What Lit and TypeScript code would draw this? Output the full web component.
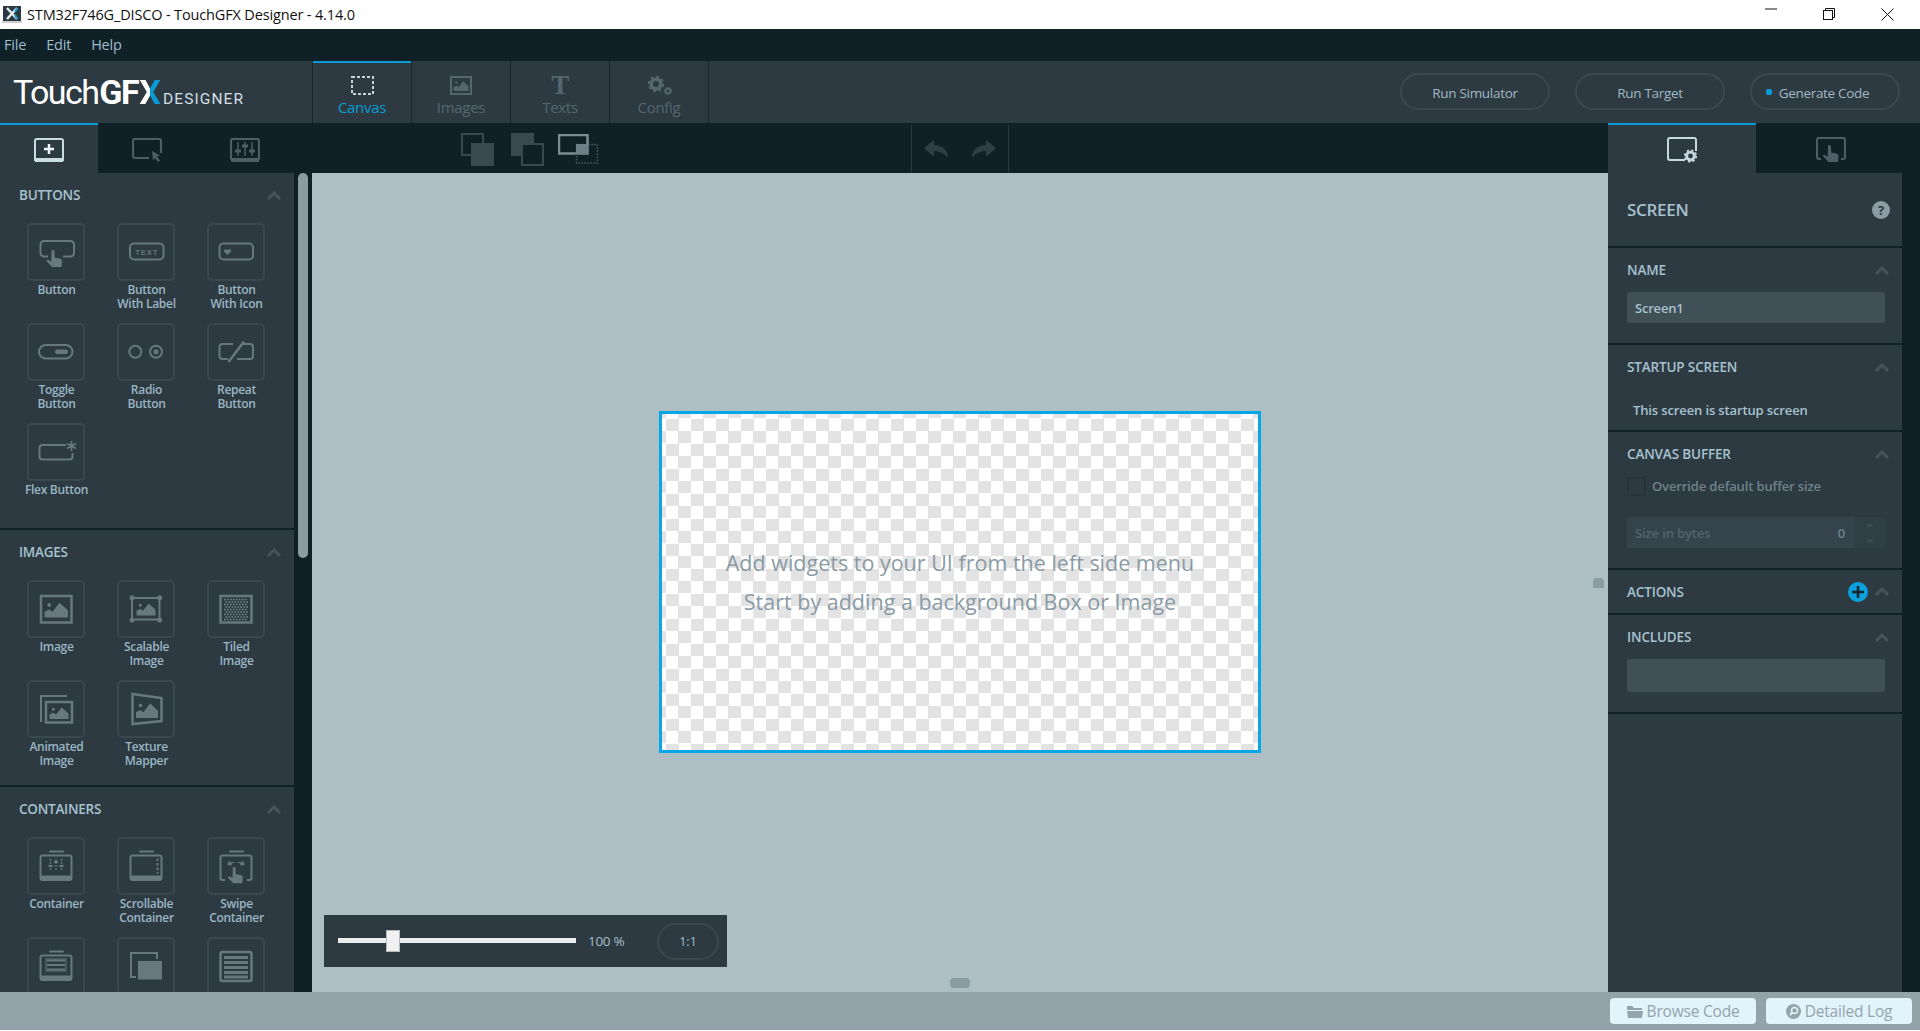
import { LitElement, html, css, svg } from "lit";
import { customElement } from "lit/decorators.js";

const IC = "#67787f";

const gear = (cx: number, cy: number, r: number, c: string) => svg`
  <circle cx=${cx} cy=${cy} r=${r * 0.6} fill="none" stroke=${c} stroke-width=${r * 0.45}/>
  <circle cx=${cx} cy=${cy} r=${r * 0.88} fill="none" stroke=${c} stroke-width=${r * 0.28}
    stroke-dasharray=${(2 * Math.PI * r * 0.88) / 16}/>`;

const picture = (x: number, y: number, w: number, h: number, c: string) => svg`
  <circle cx=${x + w * 0.2} cy=${y + h * 0.3} r=${Math.max(1.2, w * 0.08)} fill=${c}/>
  <path fill=${c} d="M${x} ${y + h}V${y + h * 0.68}l${w * 0.2} ${-h * 0.12} ${w * 0.14} ${h * 0.12} ${w * 0.3} ${-h * 0.5} ${w * 0.36} ${h * 0.42}V${y + h}z"/>`;

const hand = (dx: number, dy: number, c: string, s = 1) => svg`
  <path transform="translate(${dx} ${dy}) scale(${s})" fill=${c}
    d="M5 0.5c1-.9 2.6-.5 3 .8l.2 6.2 5 1c1.6.3 2.4 1.400 2.300 3l-.500 5.500H5.500L.3 11.500c-.8-1 .4-2.300 1.600-1.600l2.800 1.800z"/>`;

const body = (c: string) => svg`
  <path d="M23 14.500h13" stroke=${c} stroke-width="2" fill="none" stroke-linecap="round"/>
  <path d="M15.500 18.500h27a2 2 0 0 1 2 2V41a2 2 0 0 1-2 2h-27a2 2 0 0 1-2-2V20.500a2 2 0 0 1 2-2z" stroke=${c} stroke-width="2" fill="none"/>
  <rect x="13" y="38.500" width="32" height="4.500" rx="1" fill=${c}/>`;

const sliders = (x0: number, y0: number, c: string, w = 1.2) => svg`
  <path stroke=${c} stroke-width=${w} fill="none" stroke-dasharray="2 1" d="M${x0} ${y0}v12M${x0 + 5.500} ${y0}v12M${x0 + 11} ${y0}v12"/>
  <path stroke=${c} stroke-width="2.200" d="M${x0 - 2} ${y0 + 7}h4M${x0 + 3.500} ${y0 + 3}h4M${x0 + 9} ${y0 + 7}h4"/>`;

const ICONS: Record<string, unknown> = {
  button: svg`
    <path d="M21 33.500h-4a3.500 3.500 0 0 1-3.500-3.500v-8.500a3.500 3.500 0 0 1 3.500-3.500h26.500a3.500 3.500 0 0 1 3.500 3.500V30a3.500 3.500 0 0 1-3.500 3.500H36" fill="none" stroke=${IC} stroke-width="2"/>
    ${hand(19.5, 27, IC)}`,
  label: svg`
    <rect x="13" y="20.500" width="33.500" height="16" rx="4" fill="none" stroke=${IC} stroke-width="2"/>
    <text x="29.800" y="31.500" text-anchor="middle" font-family="Liberation Sans" font-weight="700" font-size="7.500" letter-spacing="1" fill=${IC}>TEXT</text>`,
  icon: svg`
    <rect x="12.500" y="20.500" width="33.500" height="16" rx="4" fill="none" stroke=${IC} stroke-width="2"/>
    <path d="M20.500 32l-3.500-3.500c-1.300-1.800 1.800-3.300 3.500-1.500 1.700-1.800 4.800-.3 3.500 1.500z" fill=${IC}/>`,
  toggle: svg`
    <rect x="12" y="22" width="33.500" height="13.500" rx="6.700" fill="none" stroke=${IC} stroke-width="2"/>
    <rect x="28" y="26.500" width="13" height="4.500" rx="2.200" fill=${IC}/>`,
  radio: svg`
    <circle cx="18.300" cy="28.700" r="6" fill="none" stroke=${IC} stroke-width="2"/>
    <circle cx="39" cy="28.700" r="6" fill="none" stroke=${IC} stroke-width="2"/>
    <circle cx="39" cy="28.700" r="2.500" fill=${IC}/>`,
  repeat: svg`
    <path d="M26 21H15.500a3 3 0 0 0-3 3v9a3 3 0 0 0 3 3H21M36 21h7a3 3 0 0 1 3 3v9a3 3 0 0 1-3 3H30" fill="none" stroke=${IC} stroke-width="2"/>
    <path d="M37 18.500L21.500 39" stroke=${IC} stroke-width="2.500"/>`,
  flex: svg`
    <path d="M39 22H15.500a3 3 0 0 0-3 3v8.500a3 3 0 0 0 3 3h27a3 3 0 0 0 3-3V30" fill="none" stroke=${IC} stroke-width="2"/>
    <path d="M44.500 18v10M40 20.500l9 5M49 20.500l-9 5" stroke=${IC} stroke-width="1.800"/>`,
  image: svg`
    <rect x="14" y="16" width="30.500" height="26.500" fill="none" stroke=${IC} stroke-width="2.500"/>
    ${picture(17.5, 19.5, 23.5, 18, IC)}`,
  scalable: svg`
    <path d="M16 18h25M16 39.500h25M15 20v18M42.500 20v18" stroke=${IC} stroke-width="2" fill="none"/>
    <circle cx="15" cy="17.700" r="2.500" fill=${IC}/><circle cx="42.700" cy="17.700" r="2.500" fill=${IC}/>
    <circle cx="15" cy="40" r="2.500" fill=${IC}/><circle cx="42.700" cy="40" r="2.500" fill=${IC}/>
    ${picture(19.5, 21, 19, 14.5, IC)}`,
  tiled: svg`
    <rect x="13.500" y="16" width="31" height="26.500" fill="none" stroke=${IC} stroke-width="2.500"/>
    ${[0, 1, 2, 3, 4, 5, 6, 7, 8].map(
      (i) => svg`<path d="M17 ${19.5 + i * 2.5}h24" stroke="#7d8d94" stroke-width="1.500" stroke-dasharray="1.500 1.500" stroke-dashoffset=${i % 2 ? 1.5 : 0}/>`
    )}`,
  animated: svg`
    <path d="M40 16H14v26" fill="none" stroke=${IC} stroke-width="2"/>
    <rect x="19" y="22" width="26" height="20.500" fill="none" stroke=${IC} stroke-width="2.500"/>
    ${picture(22.5, 25, 19, 14, IC)}`,
  texture: svg`
    <path d="M15.500 14l29 4v23l-29 3z" fill="none" stroke=${IC} stroke-width="2.500"/>
    ${picture(19, 20, 22, 18, IC)}`,
  container: svg`${body(IC)}${sliders(23.5, 22, IC)}`,
  scrollable: svg`${body(IC)}<path d="M40.500 21.500v15" stroke=${IC} stroke-width="2" stroke-dasharray="2.500 2"/>`,
  swipe: svg`
    <path d="M23 14.500h13" stroke=${IC} stroke-width="2" fill="none" stroke-linecap="round"/>
    <path d="M18 43h-2.500a2 2 0 0 1-2-2V20.500a2 2 0 0 1 2-2h27a2 2 0 0 1 2 2V41a2 2 0 0 1-2 2H40" stroke=${IC} stroke-width="2" fill="none"/>
    <path d="M20 28l2.500-4.500 1 2c2-.8 3.500-.8 5 .5-2-.2-3.200 0-4.200 1l1 1.500zM38 28l-2.500-4.500-1 2c-2-.8-3.500-.8-5 .5 2-.2 3.200 0 4.200 1l-1 1.500z" fill=${IC}/>
    ${hand(21, 30, IC, 0.95)}`,
  list: svg`${body(IC)}<path d="M20 23.500h18M20 28h18M20 32.500h18" stroke=${IC} stroke-width="2.200"/>
    <rect x="19" y="22" width="20" height="12" fill="none" stroke=${IC} stroke-width="1"/>`,
  modal: svg`
    <path d="M40 16H14v24h5" fill="none" stroke=${IC} stroke-width="2"/>
    <path d="M37 16h3v6" fill="none" stroke=${IC} stroke-width="2"/>
    <rect x="21" y="24" width="24" height="18.500" fill=${IC}/>`,
  rows: svg`
    <rect x="13.500" y="15" width="31" height="29" rx="2" fill="none" stroke=${IC} stroke-width="2.500"/>
    <path d="M17 20.500h24M17 25.500h24M17 30.500h24M17 35.500h24M17 40h24" stroke=${IC} stroke-width="3"/>`,
};

const SECTIONS = [
  {
    title: "BUTTONS",
    items: [
      ["button", "Button"],
      ["label", "Button\nWith Label"],
      ["icon", "Button\nWith Icon"],
      ["toggle", "Toggle\nButton"],
      ["radio", "Radio\nButton"],
      ["repeat", "Repeat\nButton"],
      ["flex", "Flex Button"],
    ],
  },
  {
    title: "IMAGES",
    items: [
      ["image", "Image"],
      ["scalable", "Scalable\nImage"],
      ["tiled", "Tiled\nImage"],
      ["animated", "Animated\nImage"],
      ["texture", "Texture\nMapper"],
    ],
  },
  {
    title: "CONTAINERS",
    items: [
      ["container", "Container"],
      ["scrollable", "Scrollable\nContainer"],
      ["swipe", "Swipe\nContainer"],
      ["list", ""],
      ["modal", ""],
      ["rows", ""],
    ],
  },
];

const chevron = html`<svg class="chev" width="14" height="9" viewBox="0 0 14 9"><path d="M1 8l6-6 6 6" fill="none" stroke="#45545c" stroke-width="3"/></svg>`;

@customElement("app-root")
export class AppRoot extends LitElement {
  static styles = css`
    :host {
      display: flex;
      flex-direction: column;
      width: 1920px;
      height: 1031px;
      overflow: hidden;
      background: #fff;
      font-family: "Open Sans", "Noto Sans", sans-serif;
      color: #a3bdca;
      --dark: #102027;
      --panel: #2d3a42;
    }
    svg { display: block; flex: none; }

    .titlebar { height: 29px; flex: none; display: flex; align-items: center; background: #fff; color: #111; }
    .app-icon { margin: 0 5px 0 2px; }
    .title { font-size: 14.500px; letter-spacing: -0.15px; flex: 1; white-space: nowrap; }
    .winctl { display: flex; padding-right: 3px; }
    .winctl span { width: 58.5px; display: flex; justify-content: center; }

    .menubar { height: 32px; flex: none; box-sizing: border-box; padding: 0 0 2px 4px; background: var(--dark); display: flex; align-items: center; gap: 20px; font-size: 14.500px; letter-spacing: -0.2px; color: #9dbccc; }

    .nav { height: 62px; flex: none; background: var(--panel); display: flex; }
    .logo { width: 312px; flex: none; display: flex; align-items: baseline; padding: 9px 0 0 13px; box-sizing: border-box; color: #fff; white-space: nowrap; font-family: Roboto, sans-serif; line-height: 44px; }
    .logo .a { font-size: 34px; font-weight: 400; letter-spacing: -1.600px; }
    .logo .b { font-size: 34px; font-weight: 700; letter-spacing: -1.400px; margin-left: 1px; }
    .logo .x { font-size: 34px; font-weight: 700; margin-left: 1px; background: linear-gradient(to right, #fff 48%, #0a9ad6 48%); -webkit-background-clip: text; background-clip: text; color: transparent; }
    .logo .d { font-size: 15.500px; font-weight: 400; letter-spacing: 1.100px; color: #d4dfe4; margin-left: 2px; }
    .tab { width: 98px; flex: none; border-left: 1px solid #17262d; display: flex; flex-direction: column; align-items: center; box-sizing: content-box; padding-top: 13px; height: 49px; color: #55666f; font-size: 15px; letter-spacing: -0.3px; }
    .tab.last { border-right: 1px solid #17262d; }
    .tab.on { color: #0a9ad6; box-shadow: inset 0 2px 0 #0a9ad6; }
    .tab .lbl { line-height: 18px; margin-top: 2px; }
    .tglyph { font-family: "Liberation Serif", serif; font-weight: 700; font-size: 27px; line-height: 22px; height: 22px; color: #55666f; }
    .spacer { flex: 1; }
    .actions { display: flex; gap: 25px; padding: 12px 20px 0 0; }
    .pill { width: 150px; height: 37px; box-sizing: border-box; border: 2px solid #3a4850; border-radius: 19px; padding-top: 2px; display: flex; align-items: center; justify-content: center; font-size: 13.500px; letter-spacing: -0.3px; color: #a1b8c4; }
    .pill.gen { padding-right: 15px; }
    .dot { width: 6px; height: 6px; border-radius: 2px; background: #0a9ad6; margin-right: 7px; margin-top: -2px; }

    .main { flex: 1; display: flex; min-height: 0; background: var(--dark); }
    .left { width: 312px; flex: none; display: flex; flex-direction: column; min-height: 0; }
    .strip { height: 50px; flex: none; display: flex; }
    .stab { width: 98px; height: 50px; box-sizing: border-box; padding-top: 4px; display: flex; align-items: center; justify-content: center; flex: none; }
    .stab.on { background: var(--panel); box-shadow: inset 0 2px 0 #0a9ad6; }
    .lbody { flex: 1; display: flex; min-height: 0; }
    .palette { width: 294px; flex: none; background: var(--panel); overflow: hidden; }
    .track { flex: 1; padding: 0 4px; }
    .thumb { height: 385px; background: #8a9ba3; border-radius: 5px; }
    .sec { border-bottom: 2px solid var(--dark); padding-bottom: 5px; }
    .sec-head { height: 44px; margin-bottom: 6px; display: flex; align-items: center; justify-content: space-between; padding: 0 13px 0 19px; font-size: 13.500px; font-weight: 600; letter-spacing: -0.25px; color: #a7c2cf; }
    .grid { display: grid; grid-template-columns: repeat(3, 58px); column-gap: 32px; grid-auto-rows: 100px; padding-left: 27px; }
    .item { width: 58px; }
    .box { width: 58px; height: 58px; box-sizing: border-box; border: 2px solid #39474f; border-radius: 5px; }
    .box svg { margin: -2px; }
    .item-label { width: 90px; margin: 2px 0 0 -15.500px; text-align: center; font-size: 12px; line-height: 14px; font-weight: 600; letter-spacing: -0.3px; color: #9ab5c3; white-space: pre-line; }

    .center { flex: 1; display: flex; flex-direction: column; min-width: 0; }
    .toolbar { height: 50px; flex: none; box-sizing: border-box; padding: 2px 0 0 149px; display: flex; align-items: center; }
    .tools { display: flex; align-items: center; }
    .tool2 { margin-left: 17px; }
    .tool3 { margin-left: 14px; }
    .history { margin-left: 313px; width: 98px; height: 48px; box-sizing: border-box; border-left: 1px solid #2a3a41; border-right: 1px solid #2a3a41; display: flex; align-items: center; justify-content: center; gap: 24px; }
    .stage { flex: 1; background: #adbec5; position: relative; display: flex; align-items: center; justify-content: center; }
    .frame { width: 602px; height: 342px; margin-bottom: 1px; box-sizing: border-box; border: 3px solid #08a6e6; display: flex; flex-direction: column; align-items: center; justify-content: center;
      background-color: #fff;
      background-image: conic-gradient(#e3e3e3 25%, #fff 0 50%, #e3e3e3 0 75%, #fff 0);
      background-size: 25px 25px; background-position: 4px -8px;
      font-size: 21.500px; line-height: 39px; letter-spacing: 0; color: #8a9ba5; font-weight: 400; }
    .zoom { position: absolute; left: 12px; bottom: 25px; width: 403px; height: 52px; background: var(--panel); display: flex; align-items: flex-start; padding-left: 14px; box-sizing: border-box; }
    .slider { width: 238px; height: 5px; margin-top: 23px; background: #eceeee; position: relative; }
    .handle { position: absolute; left: 48px; top: -8px; width: 14px; height: 22px; box-sizing: border-box; background: #f1f1f1; border: 1px solid #b5b9ba; }
    .pct { font-size: 13.500px; margin: 17px 0 0 12px; line-height: 18px; letter-spacing: -0.3px; color: #a3bdca; width: 69px; }
    .oneone { width: 62px; height: 37px; margin-top: 8px; box-sizing: border-box; border: 2px solid #3a4850; border-radius: 19px; display: flex; align-items: center; justify-content: center; font-size: 12.500px; color: #a3bdca; }
    .grip-b { position: absolute; left: 638px; bottom: 4px; width: 20px; height: 10px; border-radius: 4px; background: #8a9ca4; }
    .grip-r { position: absolute; right: 4px; top: 405px; width: 11px; height: 10px; border-radius: 4px 4px 0 0; background: #8a9ca4; }

    .right { width: 312px; flex: none; display: flex; flex-direction: column; min-height: 0; }
    .rtab { height: 50px; box-sizing: border-box; padding-top: 4px; display: flex; align-items: center; justify-content: center; flex: none; }
    .rtab.a { width: 148px; background: var(--panel); box-shadow: inset 0 2px 0 #0a9ad6; }
    .rtab.b { width: 150px; }
    .props { width: 294px; flex: 1; background: var(--panel); }
    .prop { border-bottom: 2px solid var(--dark); padding: 0 0 20px 19px; }
    .prop.tight { padding-bottom: 0; }
    .prop-head { height: 44px; display: flex; align-items: center; justify-content: space-between; padding-right: 13px; font-size: 13.500px; font-weight: 600; letter-spacing: -0.15px; color: #a7c2cf; }
    .prop-head.h43 { height: 43px; }
    .screen-head { height: 73px; display: flex; align-items: center; justify-content: space-between; padding-right: 12px; font-size: 17px; font-weight: 600; letter-spacing: -0.3px; color: #a7c2cf; }
    .help { width: 18px; height: 18px; border-radius: 50%; background: #8d9ca4; color: var(--panel); font-size: 13px; font-weight: 700; display: flex; align-items: center; justify-content: center; }
    .head-right { display: flex; align-items: center; gap: 7px; }
    .plus { width: 20px; height: 20px; border-radius: 50%; background: #0aa0dd; display: flex; align-items: center; justify-content: center; }
    .field { width: 258px; height: 31px; background: #414f57; border-radius: 3px; box-sizing: border-box; padding-left: 8px; display: flex; align-items: center; font-size: 13px; letter-spacing: -0.2px; font-weight: 600; color: #a7c2cf; }
    .field.tall { height: 33px; }
    .startup { height: 41px; display: flex; align-items: center; padding-left: 6px; font-size: 13px; letter-spacing: -0.13px; font-weight: 600; color: #a7c2cf; }
    .check-row { display: flex; align-items: center; margin-top: 1px; gap: 6px; height: 19px; font-size: 13px; letter-spacing: -0.13px; font-weight: 600; color: #6f828c; }
    .check-row span:last-child { margin-top: -2px; }
    .check { width: 19px; height: 19px; box-sizing: border-box; border: 2px solid #26343b; border-radius: 3px; }
    .number { width: 258px; height: 31px; margin-top: 21px; display: flex; font-size: 13px; letter-spacing: -0.13px; font-weight: 600; color: #51636d; }
    .num-in { width: 227px; background: #35444c; border-radius: 3px 0 0 3px; box-sizing: border-box; padding: 0 9px 0 8px; display: flex; align-items: center; justify-content: space-between; }
    .num-in b { font-weight: 600; color: #6f828c; }
    .spin { flex: 1; background: #303e46; border-radius: 0 3px 3px 0; display: flex; align-items: center; justify-content: center; }

    .bottom { height: 38px; flex: none; background: #93a3a9; display: flex; justify-content: flex-end; gap: 10px; padding: 6px 8px 0 0; box-sizing: border-box; margin-bottom: 1px; }
    .bbtn { width: 146px; height: 26px; background: #e1f3fb; border-radius: 4px; display: flex; align-items: center; justify-content: center; gap: 4px; font-size: 15.500px; letter-spacing: -0.2px; color: #94a4ab; }
  `;

  private palette() {
    return SECTIONS.map(
      (s) => html`
        <div class="sec">
          <div class="sec-head"><span>${s.title}</span>${chevron}</div>
          <div class="grid">
            ${s.items.map(
              ([ic, label]) => html`
                <div class="item">
                  <div class="box"><svg width="58" height="58" viewBox="0 0 58 58">${ICONS[ic]}</svg></div>
                  ${label ? html`<div class="item-label">${label}</div>` : ""}
                </div>`
            )}
          </div>
        </div>`
    );
  }

  render() {
    const dim = "#55666f";
    const tb = "#4e5e66";
    return html`
      <div class="titlebar">
        <svg class="app-icon" width="20" height="18" viewBox="0 0 20 18">
          <rect x="1" y="0" width="18" height="15" fill="#2b3a42"/>
          <rect x="0" y="15" width="20" height="2" fill="#c9cfd2"/>
          <path d="M5 2l10 11M15 2L5 13" stroke="#e8eef0" stroke-width="2.400"/>
          <path d="M13 6l2-4M13 9l2 4" stroke="#1a9ad6" stroke-width="2"/>
        </svg>
        <div class="title">STM32F746G_DISCO - TouchGFX Designer - 4.14.0</div>
        <div class="winctl">
          <span><svg width="12" height="2"><path d="M0 1h12" stroke="#111"/></svg></span>
          <span><svg width="12" height="12" viewBox="0 0 12 12"><rect x=".5" y="2.500" width="9" height="9" fill="none" stroke="#111"/><path d="M2.500 2.500V.5h9v9H9.500" fill="none" stroke="#111"/></svg></span>
          <span><svg width="13" height="13" viewBox="0 0 13 13"><path d="M.5.5l12 12M12.500.5l-12 12" stroke="#111"/></svg></span>
        </div>
      </div>

      <div class="menubar"><span>File</span><span>Edit</span><span>Help</span></div>

      <div class="nav">
        <div class="logo"><span class="a">Touch</span><span class="b">GF</span><span class="x">X</span><span class="d">DESIGNER</span></div>
        <div class="tab on">
          <svg width="30" height="22" viewBox="0 0 30 22"><rect x="5" y="3" width="21" height="17" fill="none" stroke="#c3d4dc" stroke-width="2" stroke-dasharray="3 2"/></svg>
          <span class="lbl">Canvas</span>
        </div>
        <div class="tab">
          <svg width="30" height="22" viewBox="0 0 30 22"><rect x="5" y="3" width="20" height="17" fill="none" stroke=${dim} stroke-width="2"/>${picture(7.5, 5, 15, 12, dim)}</svg>
          <span class="lbl">Images</span>
        </div>
        <div class="tab">
          <span class="tglyph">T</span>
          <span class="lbl">Texts</span>
        </div>
        <div class="tab last">
          <svg width="30" height="22" viewBox="0 0 30 22">${gear(12, 10, 8, dim)}${gear(24, 17, 4, dim)}</svg>
          <span class="lbl">Config</span>
        </div>
        <div class="spacer"></div>
        <div class="actions">
          <div class="pill">Run Simulator</div>
          <div class="pill">Run Target</div>
          <div class="pill gen"><span class="dot"></span>Generate Code</div>
        </div>
      </div>

      <div class="main">
        <div class="left">
          <div class="strip">
            <div class="stab on">
              <svg width="30" height="24" viewBox="0 0 30 24">
                <path d="M3 1h24a2 2 0 0 1 2 2v19H1V3a2 2 0 0 1 2-2z" fill="none" stroke="#c9dbe3" stroke-width="2"/>
                <rect x="1" y="20" width="28" height="4" fill="#c9dbe3"/>
                <path d="M15 6v10M10 11h10" stroke="#eef5f8" stroke-width="2.500"/>
              </svg>
            </div>
            <div class="stab">
              <svg width="30" height="24" viewBox="0 0 30 24">
                <path d="M17 20H3a2 2 0 0 1-2-2V3a2 2 0 0 1 2-2h24a2 2 0 0 1 2 2v12" fill="none" stroke=${tb} stroke-width="2.200"/>
                <path d="M20 13l8 4.500-3 1 3 4-2 1.500-3-4-2 2.500z" fill=${tb}/>
              </svg>
            </div>
            <div class="stab">
              <svg width="30" height="24" viewBox="0 0 30 24">
                <rect x="1" y="1" width="28" height="21" rx="2" fill="none" stroke=${tb} stroke-width="2.200"/>
                <rect x="1" y="20" width="28" height="4" rx="1" fill=${tb}/>
                <path d="M8 4v14M15 4v14M22 4v14" stroke=${tb} stroke-width="1.500"/>
                <path d="M5 13h6M12 8h6M19 13h6" stroke=${tb} stroke-width="3"/>
              </svg>
            </div>
          </div>
          <div class="lbody">
            <div class="palette">${this.palette()}</div>
            <div class="track"><div class="thumb"></div></div>
          </div>
        </div>

        <div class="center">
          <div class="toolbar">
            <div class="tools">
              <svg width="33" height="33" viewBox="0 0 33 33">
                <rect x="1" y="1" width="21" height="21" fill="none" stroke="#39494f" stroke-width="2"/>
                <rect x="10" y="10" width="23" height="23" fill="#39494f"/>
              </svg>
              <svg class="tool2" width="33" height="33" viewBox="0 0 33 33">
                <rect x="0" y="0" width="23" height="23" fill="#39494f"/>
                <rect x="11" y="11" width="21" height="21" fill="#102027" stroke="#39494f" stroke-width="2"/>
              </svg>
              <svg class="tool3" width="40" height="30" viewBox="0 0 40 30">
                <rect x="1" y="1" width="28.500" height="18.500" fill="none" stroke="#7b8d94" stroke-width="2.500"/>
                <rect x="18.500" y="10.500" width="21" height="18.500" fill="none" stroke="#4e5e66" stroke-width="1.500" stroke-dasharray="1.500 1.500"/>
                <rect x="18" y="10" width="12" height="10" fill="#6d8087"/>
              </svg>
            </div>
            <div class="history">
              <svg width="24" height="18" viewBox="0 0 24 18"><path d="M0 8L10 0v5c8 0 14 5 14 13-4-5-8-7-14-7v6z" fill="#2f3f46"/></svg>
              <svg width="24" height="18" viewBox="0 0 24 18"><path d="M24 8L14 0v5C6 5 0 10 0 18c4-5 8-7 14-7v6z" fill="#2f3f46"/></svg>
            </div>
          </div>
          <div class="stage">
            <div class="frame">
              <div>Add widgets to your UI from the left side menu</div>
              <div>Start by adding a background Box or Image</div>
            </div>
            <div class="zoom">
              <div class="slider"><div class="handle"></div></div>
              <div class="pct">100 %</div>
              <div class="oneone">1:1</div>
            </div>
            <div class="grip-b"></div>
            <div class="grip-r"></div>
          </div>
        </div>

        <div class="right">
          <div class="strip">
            <div class="rtab a">
              <svg width="30" height="26" viewBox="0 0 30 26">
                <path d="M18 23H3a2 2 0 0 1-2-2V3a2 2 0 0 1 2-2h24a2 2 0 0 1 2 2v11" fill="none" stroke="#c6d9e1" stroke-width="2"/>
                ${gear(23.5, 19, 6.5, "#c6d9e1")}
              </svg>
            </div>
            <div class="rtab b">
              <svg width="30" height="26" viewBox="0 0 30 26">
                <path d="M1 20V3a2 2 0 0 1 2-2h24a2 2 0 0 1 2 2v17a2 2 0 0 1-2 2h-2M5 22H3a2 2 0 0 1-2-2" fill="none" stroke=${tb} stroke-width="2"/>
                ${hand(7, 8, tb, 1)}
              </svg>
            </div>
          </div>
          <div class="props">
            <div class="prop tight"><div class="screen-head"><span>SCREEN</span><span class="help">?</span></div></div>
            <div class="prop">
              <div class="prop-head"><span>NAME</span>${chevron}</div>
              <div class="field">Screen1</div>
            </div>
            <div class="prop tight">
              <div class="prop-head"><span>STARTUP SCREEN</span>${chevron}</div>
              <div class="startup">This screen is startup screen</div>
            </div>
            <div class="prop">
              <div class="prop-head"><span>CANVAS BUFFER</span>${chevron}</div>
              <div class="check-row"><span class="check"></span><span>Override default buffer size</span></div>
              <div class="number">
                <div class="num-in"><span>Size in bytes</span><b>0</b></div>
                <div class="spin">
                  <svg width="10" height="24" viewBox="0 0 10 24"><path d="M1 6l4-4 4 4zM1 18l4 4 4-4z" fill="#3d4c54"/></svg>
                </div>
              </div>
            </div>
            <div class="prop tight">
              <div class="prop-head h43">
                <span>ACTIONS</span>
                <span class="head-right">
                  <span class="plus"><svg width="12" height="12" viewBox="0 0 12 12"><path d="M6 0v12M0 6h12" stroke="#17262d" stroke-width="2.600"/></svg></span>
                  ${chevron}
                </span>
              </div>
            </div>
            <div class="prop">
              <div class="prop-head"><span>INCLUDES</span>${chevron}</div>
              <div class="field tall"></div>
            </div>
          </div>
        </div>
      </div>

      <div class="bottom">
        <div class="bbtn">
          <svg width="16" height="13" viewBox="0 0 16 13"><path d="M0 2a1 1 0 0 1 1-1h4l2 2h7a1 1 0 0 1 1 1v1H0zM0 6h16l-1 7H1z" fill="#94a4ab"/></svg>
          <span>Browse Code</span>
        </div>
        <div class="bbtn">
          <svg width="15" height="15" viewBox="0 0 15 15"><circle cx="7.500" cy="7.500" r="7.500" fill="#94a4ab"/><circle cx="8.500" cy="6.500" r="3" fill="none" stroke="#e1f3fb" stroke-width="1.500"/><path d="M6.500 8.500l-2.500 2.500" stroke="#e1f3fb" stroke-width="1.800"/></svg>
          <span>Detailed Log</span>
        </div>
      </div>
    `;
  }
}
